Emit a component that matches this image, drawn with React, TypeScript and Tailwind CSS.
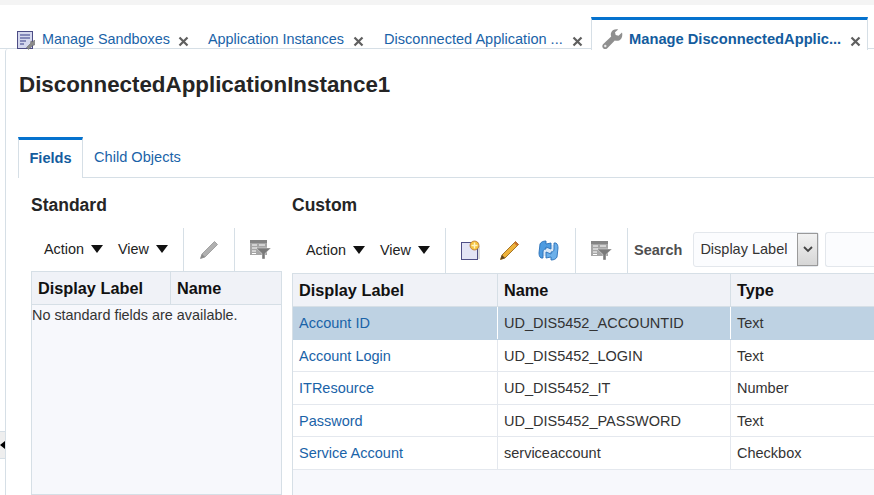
const linkText = "text-[#1a63a8]";

function CloseIcon() {
  return (
    <svg width="11" height="11" viewBox="0 0 11 11" className="shrink-0">
      <path d="M1.5 1.5L9.5 9.5M9.5 1.5L1.5 9.5" stroke="#5f5f5f" strokeWidth="2.2" />
    </svg>
  );
}

function SandboxIcon() {
  return (
    <svg width="18" height="19" viewBox="0 0 18 19" className="shrink-0">
      <rect x="0.5" y="0.5" width="15" height="17" fill="#d5d8ee" stroke="#4d4d86" />
      <path d="M3 4h10M3 7h10M3 10h6M3 13h4" stroke="#6a6fa8" strokeWidth="1.3" />
      <path d="M17.500 9l-2 2-1.500-1-.5 2.500-4 4 2 2 4-4 2-.5z" fill="#8b8b8b" stroke="#6c6c6c" strokeWidth="0.6" />
    </svg>
  );
}

function WrenchIcon() {
  return (
    <svg width="21" height="21" viewBox="0 0 21 21" className="shrink-0">
      <path d="M20 3.5l-3.5 3.2-2.8-.6-.7-2.8L16.200 .6C13.500-.3 10.300 .9 9.200 3.400c-.6 1.400-.5 2.900 0 4.200L1.300 15c-1.300 1.200-1.300 3 -.2 4.200 1.200 1.200 3 1.200 4.200 0l7.500-7.700c1.400.5 3 .5 4.400-.1 2.600-1.200 3.700-4.900 2.800-7.900z" fill="#8f8f8f" />
      <circle cx="3.300" cy="17" r="1.200" fill="#e8e8e8" />
    </svg>
  );
}

function PencilIcon() {
  return (
    <svg width="20" height="20" viewBox="0 0 20 20">
      <path d="M15.500 1.500l3 3L6 17l-4.500 1.500L3 14z" fill="#b0b0b0" stroke="#949494" strokeWidth="0.8" />
      <path d="M3 14l3 3-4.500 1.500z" fill="#8a8a8a" />
    </svg>
  );
}

function FilterIcon() {
  return (
    <svg width="21" height="19" viewBox="0 0 21 19">
      <rect x="0" y="0" width="17" height="15" fill="#a6a6a6" />
      <rect x="0" y="0" width="17" height="3" fill="#858585" />
      <path d="M2 5h5M2 8h5M2 11h4M2 13.500h4M9 5h6" stroke="#ffffff" strokeWidth="1" />
      <path d="M6 8h15l-6 5.500V19h-3v-5.500z" fill="#7a7a7a" stroke="#ffffff" strokeWidth="0.4" />
    </svg>
  );
}

function NewIcon() {
  return (
    <svg width="20" height="21" viewBox="0 0 20 21">
      <rect x="0.500" y="2.500" width="16" height="17" fill="#e3e4f5" stroke="#4f4f86" />
      <path d="M18 19V6" stroke="#b8b8b8" />
      <circle cx="13.500" cy="5.500" r="4.500" fill="#f5c23d" stroke="#b5733a" strokeWidth="0.8" />
      <path d="M13.500 2.500v6M10.500 5.500h6" stroke="#fff3c4" strokeWidth="1.500" />
    </svg>
  );
}

function EditIcon() {
  return (
    <svg width="21" height="21" viewBox="0 0 21 21">
      <path d="M16.500 1.500l3 3L6 18l-4.500 1.500L3 15z" fill="#eeb23a" stroke="#9a6a1c" strokeWidth="0.9" />
      <path d="M15 3l3 3 1.500-1.500-3-3z" fill="#c9702c" />
      <path d="M3 15l3 3-4.500 1.500z" fill="#5c4320" />
    </svg>
  );
}

function SyncIcon() {
  return (
    <svg width="21" height="21" viewBox="0 0 21 21">
      <rect x="5" y="5" width="11" height="11" fill="#dbe9f7" />
      <path d="M2 4c1-2 3-3 6-3v3l5-1v6l-5-2v2c-2 0-3 1-3 3v6H3c-1.500-1-2-3-2-5z" fill="#4d9be0" stroke="#2a70b8" strokeWidth="0.9" />
      <path d="M19 17c-1 2-3 3-6 3v-3l-5 1v-6l5 2v-2c2 0 3-1 3-3V3h2c1.500 1 2 3 2 5z" fill="#6cb0ea" stroke="#2a70b8" strokeWidth="0.9" />
    </svg>
  );
}

function Caret() {
  return <span className="ml-[7px] inline-block h-0 w-0 border-x-[6px] border-t-[8px] border-x-transparent border-t-[#111]" />;
}

function Menus() {
  return (
    <div className="flex items-center gap-[15px] pl-[13px] text-[14.400px] text-[#222]">
      <span className="flex items-center">Action<Caret /></span>
      <span className="flex items-center">View<Caret /></span>
    </div>
  );
}

const rows = [
  ["Account ID", "UD_DIS5452_ACCOUNTID", "Text"],
  ["Account Login", "UD_DIS5452_LOGIN", "Text"],
  ["ITResource", "UD_DIS5452_IT", "Number"],
  ["Password", "UD_DIS5452_PASSWORD", "Text"],
  ["Service Account", "serviceaccount", "Checkbox"],
];

export default function App() {
  return (
    <div className="relative flex h-[495px] w-[874px] flex-col overflow-hidden bg-white font-['Liberation_Sans',Arial,sans-serif]">
      <div className="h-[5px] bg-[#f4f4f4]" />

      {/* top tabs */}
      <div className="flex h-[44px] items-end text-[14.400px]">
        <div className="flex h-[32px] w-[591px] items-center border-b border-[#d6dfe6] pl-[17px] pt-[15px]">
          <SandboxIcon />
          <span className={`ml-[7px] ${linkText}`}>Manage Sandboxes</span>
          <span className="ml-[8px] mt-[2px]"><CloseIcon /></span>
          <span className={`ml-[19px] ${linkText}`}>Application Instances</span>
          <span className="ml-[9px] mt-[2px]"><CloseIcon /></span>
          <span className={`ml-[20px] text-[14.550px] ${linkText}`}>Disconnected Application ...</span>
          <span className="ml-[9px] mt-[2px]"><CloseIcon /></span>
        </div>
        <div className="relative z-10 -mb-px flex h-[33px] w-[277px] items-center border-x border-t-[3px] border-x-[#d6dfe6] border-t-[#0572ce] bg-white pl-[10px] pt-[9px]">
          <WrenchIcon />
          <span className="ml-[6px] text-[14.700px] font-bold text-[#145c9e]">Manage DisconnectedApplic...</span>
          <span className="ml-[9px] mt-[4px]"><CloseIcon /></span>
        </div>
        <div className="h-[32px] flex-1 border-b border-[#d6dfe6]" />
      </div>

      {/* main panel */}
      <div className="ml-[5px] flex min-h-0 flex-1 flex-col rounded-tl-[3px] border-l border-[#d6dfe6]">
        <h1 className="ml-[13px] mt-[23px] h-[26px] text-[22.350px] leading-[26px] font-bold text-[#252525]">DisconnectedApplicationInstance1</h1>

        <div className="ml-[12px] mt-[39px] flex h-[41px] items-end border-b border-[#d6dfe6] text-[14.600px]">
          <div className="-mb-px flex h-[41px] w-[65px] items-center justify-center border-x border-t-[3px] border-x-[#d6dfe6] border-t-[#0572ce] bg-white pb-[1px] font-bold text-[#145c9e]">Fields</div>
          <div className={`flex h-[41px] items-center pl-[11px] pt-[3px] ${linkText}`}>Child Objects</div>
        </div>

        <div className="flex min-h-0 flex-1 pl-[25px]">
          {/* standard */}
          <div className="flex w-[251px] shrink-0 flex-col">
            <h2 className="mt-[17px] h-[20px] text-[17.500px] leading-[20px] font-bold text-[#252525]">Standard</h2>
            <div className="mt-[13px] flex h-[43px] shrink-0 items-center">
              <div className="w-[152px]"><Menus /></div>
              <div className="flex h-[43px] w-[52px] items-center justify-center border-x border-[#d6dfe6]"><PencilIcon /></div>
              <div className="flex h-[43px] flex-1 items-center pl-[15px]"><FilterIcon /></div>
            </div>
            <div className="flex-1 border border-[#d6dfe6] bg-[#f7f8fc]">
              <div className="flex h-[33px] border-b border-[#d6dfe6] bg-[#f0f2f7] text-[16.300px] leading-[33px] font-bold text-[#111]">
                <div className="w-[139px] border-r border-[#d6dfe6] pl-[6px]">Display Label</div>
                <div className="pl-[6px]">Name</div>
              </div>
              <div className="text-[14.400px] text-[#333]">No standard fields are available.</div>
            </div>
          </div>

          {/* custom */}
          <div className="ml-[10px] flex min-w-0 flex-1 flex-col">
            <h2 className="mt-[17px] h-[20px] text-[17.500px] leading-[20px] font-bold text-[#252525]">Custom</h2>
            <div className="mt-[13px] flex h-[45px] shrink-0 items-center">
              <div className="w-[153px] pl-[1px]"><Menus /></div>
              <div className="flex h-[45px] w-[131px] items-center gap-[18px] border-x border-[#d6dfe6] pl-[15px]">
                <NewIcon />
                <EditIcon />
                <SyncIcon />
              </div>
              <div className="flex h-[45px] w-[52px] items-center justify-center border-r border-[#d6dfe6]"><FilterIcon /></div>
              <span className="ml-[6px] mt-[1px] text-[14.500px] font-bold text-[#4f4f4f]">Search</span>
              <div className="mb-[2px] ml-[11px] flex h-[35px] w-[126px] items-stretch rounded-[3px] border border-[#e3e7ec] bg-[#fbfcfe] text-[14.500px] text-[#333]">
                <span className="flex-1 pl-[6px] pt-[6px]">Display Label</span>
                <span className="flex w-[21px] items-center justify-center border border-[#9a9a9a] bg-gradient-to-b from-[#f2f2f2] to-[#d6d6d6]">
                  <svg width="10" height="7" viewBox="0 0 10 7"><path d="M1 1l4 4 4-4" fill="none" stroke="#444" strokeWidth="1.800" /></svg>
                </span>
              </div>
              <div className="mb-[2px] ml-[6px] h-[35px] flex-1 rounded-l-[3px] border border-r-0 border-[#e3e7ec] bg-[#fbfcfe]" />
            </div>
            <div className="flex flex-1 flex-col border-l border-t border-[#d6dfe6] bg-[#f7f8fc]">
              <div className="flex h-[33px] shrink-0 border-b border-[#d6dfe6] bg-[#f0f2f7] text-[16.300px] leading-[32px] font-bold text-[#111]">
                <div className="w-[205px] border-r border-[#d6dfe6] pl-[6px]">Display Label</div>
                <div className="w-[233px] border-r border-[#d6dfe6] pl-[6px]">Name</div>
                <div className="pl-[6px]">Type</div>
              </div>
              {rows.map((row, i) => (
                <div key={row[0]} className={`flex h-[32.600px] shrink-0 border-b text-[14.500px] leading-[32px] ${i === 0 ? "border-[#bed2e3] bg-[#bed2e3]" : "border-[#e4e8ee] bg-white"}`}>
                  <div className={`w-[205px] border-r pl-[6px] ${linkText} ${i === 0 ? "border-white" : "border-[#e4e8ee]"}`}>{row[0]}</div>
                  <div className={`w-[233px] border-r pl-[6px] text-[#333] ${i === 0 ? "border-white" : "border-[#e4e8ee]"}`}>{row[1]}</div>
                  <div className="pl-[6px] text-[#333]">{row[2]}</div>
                </div>
              ))}
            </div>
          </div>
        </div>
      </div>

      {/* splitter handle */}
      <div className="absolute left-0 top-[431px] flex h-[28px] w-[5px] items-center overflow-hidden border-y border-[#d6dfe6] bg-[#eeeeee]">
        <span className="h-0 w-0 border-y-[4px] border-r-[5px] border-y-transparent border-r-black" />
      </div>
    </div>
  );
}
